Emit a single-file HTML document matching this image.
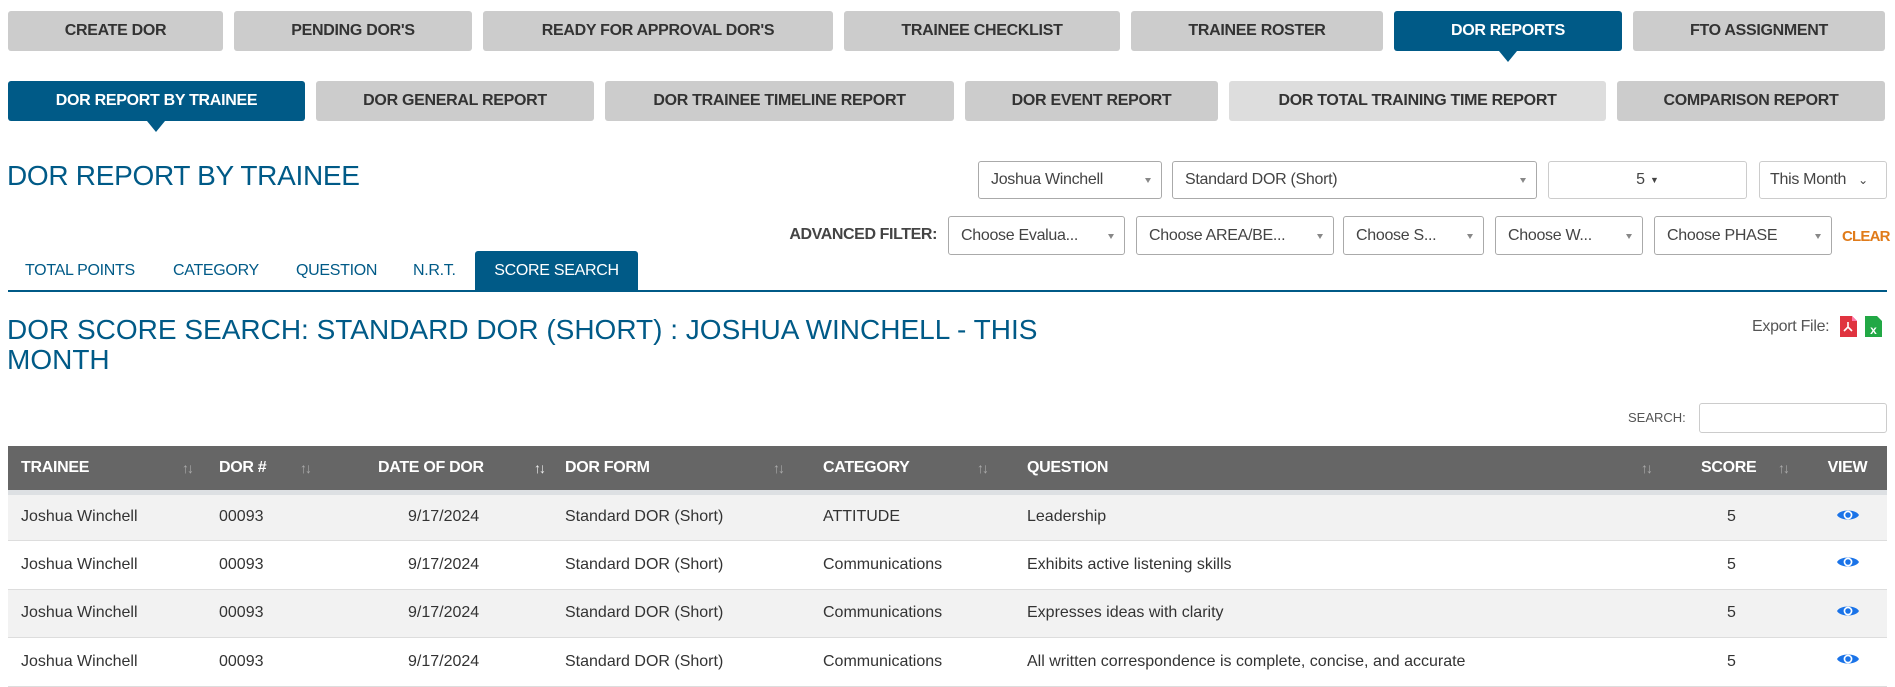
<!DOCTYPE html>
<html><head><meta charset="utf-8">
<style>
*{box-sizing:border-box;margin:0;padding:0}
body{width:1895px;height:666px;overflow:hidden;background:#fff;font-family:"Liberation Sans",sans-serif;color:#333;position:relative}
.a{position:absolute}
.btn{position:absolute;background:#ccc;border-radius:3px;font-weight:bold;font-size:16px;letter-spacing:-0.3px;color:#333;display:flex;align-items:center;justify-content:center}
.btn.on{background:#005a87;color:#fff}
.tri{position:absolute;width:0;height:0;border-left:9px solid transparent;border-right:9px solid transparent;border-top:11px solid #005a87}
.sel{position:absolute;border:1px solid #aaa;border-radius:3px;font-size:16px;color:#444;display:flex;align-items:center;padding-left:12px;background:#fff;letter-spacing:-0.3px}
.sel:after{content:"";position:absolute;right:10px;top:50%;margin-top:-2px;border-left:3px solid transparent;border-right:3px solid transparent;border-top:5px solid #888}
.tab{position:absolute;top:251px;height:40px;font-size:16px;color:#005a87;display:flex;align-items:center;letter-spacing:-0.3px}
table{position:absolute;left:8px;top:446px;width:1879px;border-collapse:collapse;font-size:16px;table-layout:fixed}
th{background:#666;color:#fff;font-weight:bold;text-align:left;height:46px;border-bottom:5px solid #dde0e3;position:relative;padding-left:13px;letter-spacing:-0.3px}
td{height:48.5px;padding-left:13px;border-bottom:1px solid #ddd}
tr:nth-child(even) td{background:#f2f2f2}
.s{position:absolute;top:14px;color:#aaa;font-size:14px;font-weight:normal;letter-spacing:-2px}
</style></head><body>
<div class="btn" style="left:8px;top:11px;width:215px;height:40px">CREATE DOR</div>
<div class="btn" style="left:234px;top:11px;width:238px;height:40px">PENDING DOR'S</div>
<div class="btn" style="left:483px;top:11px;width:350px;height:40px">READY FOR APPROVAL DOR'S</div>
<div class="btn" style="left:844px;top:11px;width:276px;height:40px">TRAINEE CHECKLIST</div>
<div class="btn" style="left:1131px;top:11px;width:252px;height:40px">TRAINEE ROSTER</div>
<div class="btn on" style="left:1394px;top:11px;width:228px;height:40px">DOR REPORTS</div>
<div class="tri" style="left:1499px;top:51px"></div>
<div class="btn" style="left:1633px;top:11px;width:252px;height:40px">FTO ASSIGNMENT</div>

<div class="btn on" style="left:8px;top:81px;width:297px;height:40px">DOR REPORT BY TRAINEE</div>
<div class="tri" style="left:147px;top:121px"></div>
<div class="btn" style="left:316px;top:81px;width:278px;height:40px">DOR GENERAL REPORT</div>
<div class="btn" style="left:605px;top:81px;width:349px;height:40px">DOR TRAINEE TIMELINE REPORT</div>
<div class="btn" style="left:965px;top:81px;width:253px;height:40px">DOR EVENT REPORT</div>
<div class="btn" style="left:1229px;top:81px;width:377px;height:40px;background:#ddd">DOR TOTAL TRAINING TIME REPORT</div>
<div class="btn" style="left:1617px;top:81px;width:268px;height:40px">COMPARISON REPORT</div>

<div class="a" style="left:7px;top:160px;font-size:28px;letter-spacing:-0.3px;color:#005a87">DOR REPORT BY TRAINEE</div>

<div class="sel" style="left:978px;top:161px;width:184px;height:38px">Joshua Winchell</div>
<div class="sel" style="left:1172px;top:161px;width:365px;height:38px">Standard DOR (Short)</div>
<div class="a" style="left:1548px;top:161px;width:199px;height:38px;border:1px solid #ccc;border-radius:3px;font-size:16px;display:flex;align-items:center;justify-content:center;color:#444">5 <span style="font-size:9px;margin-left:5px">▼</span></div>
<div class="a" style="left:1759px;top:161px;width:128px;height:38px;border:1px solid #ccc;border-radius:3px;font-size:16px;display:flex;align-items:center;padding-left:10px;color:#444;letter-spacing:-0.3px">This Month <span style="margin-left:12px;font-size:12px">⌄</span></div>

<div class="a" style="left:760px;top:226px;width:177px;text-align:right;font-size:16px;font-weight:bold;color:#444;letter-spacing:-0.4px">ADVANCED FILTER:</div>
<div class="sel" style="left:948px;top:216px;width:177px;height:39px">Choose Evalua...</div>
<div class="sel" style="left:1136px;top:216px;width:198px;height:39px">Choose AREA/BE...</div>
<div class="sel" style="left:1343px;top:216px;width:141px;height:39px">Choose S...</div>
<div class="sel" style="left:1495px;top:216px;width:148px;height:39px">Choose W...</div>
<div class="sel" style="left:1654px;top:216px;width:178px;height:39px">Choose PHASE</div>
<div class="a" style="left:1842px;top:228px;font-size:15px;font-weight:bold;color:#e07b1a;letter-spacing:-0.8px">CLEAR</div>

<div class="tab" style="left:25px">TOTAL POINTS</div>
<div class="tab" style="left:173px">CATEGORY</div>
<div class="tab" style="left:296px">QUESTION</div>
<div class="tab" style="left:413px">N.R.T.</div>
<div class="tab" style="left:475px;width:163px;background:#005a87;color:#fff;justify-content:center;border-radius:3px 3px 0 0">SCORE SEARCH</div>
<div class="a" style="left:8px;top:290px;width:1879px;height:2px;background:#005a87"></div>

<div class="a" style="left:7px;top:315px;width:1080px;font-size:28px;line-height:30px;color:#005a87">DOR SCORE SEARCH: STANDARD DOR (SHORT) : JOSHUA WINCHELL - THIS MONTH</div>
<div class="a" style="left:1752px;top:318px;font-size:16px;color:#555;letter-spacing:-0.3px">Export File:</div>
<svg class="a" style="left:1840px;top:316px" width="17" height="21" viewBox="0 0 17 21"><path d="M0 0h12l5 5v16H0z" fill="#e0333f"/><path d="M12 0v5h5" fill="#f7a"/><path d="M8 6v6M4 15l4-4 4 4" stroke="#fff" stroke-width="1.6" fill="none"/></svg>
<svg class="a" style="left:1865px;top:316px" width="17" height="21" viewBox="0 0 17 21"><path d="M0 0h12l5 5v16H0z" fill="#22a845"/><text x="8.5" y="18" fill="#fff" font-size="12" font-weight="bold" text-anchor="middle" font-family="Liberation Sans">x</text></svg>

<div class="a" style="left:1628px;top:410px;font-size:13px;color:#555">SEARCH:</div>
<div class="a" style="left:1699px;top:403px;width:188px;height:30px;border:1px solid #ccc;border-radius:3px"></div>

<table>
<colgroup><col style="width:198px"><col style="width:162px"><col style="width:184px"><col style="width:258px"><col style="width:204px"><col style="width:669px"><col style="width:125px"><col></colgroup>
<tr><th>TRAINEE<span class="s" style="left:174px">↑↓</span></th>
<th>DOR #<span class="s" style="left:94px">↑↓</span></th>
<th style="padding-left:10px">DATE OF DOR<span class="s" style="left:166px;color:#eee">↑↓</span></th>
<th>DOR FORM<span class="s" style="left:221px">↑↓</span></th>
<th>CATEGORY<span class="s" style="left:167px">↑↓</span></th>
<th>QUESTION<span class="s" style="left:627px">↑↓</span></th>
<th style="padding-left:0;text-align:left;padding-left:18px">SCORE<span class="s" style="left:95px">↑↓</span></th>
<th style="padding-left:0;text-align:center">VIEW</th></tr>
<tr><td>Joshua Winchell</td><td>00093</td><td style="padding-left:40px">9/17/2024</td><td>Standard DOR (Short)</td><td>ATTITUDE</td><td>Leadership</td><td style="padding-left:44px">5</td><td style="text-align:center;padding:0"><svg width="22" height="16" viewBox="0 0 20 14"><path d="M0 7C3 1.5 17 1.5 20 7C17 12.5 3 12.5 0 7z" fill="#1a73e8"/><circle cx="10" cy="7" r="4" fill="#fff"/><circle cx="10" cy="7" r="2.5" fill="#1a73e8"/></svg></td></tr>
<tr><td>Joshua Winchell</td><td>00093</td><td style="padding-left:40px">9/17/2024</td><td>Standard DOR (Short)</td><td>Communications</td><td>Exhibits active listening skills</td><td style="padding-left:44px">5</td><td style="text-align:center;padding:0"><svg width="22" height="16" viewBox="0 0 20 14"><path d="M0 7C3 1.5 17 1.5 20 7C17 12.5 3 12.5 0 7z" fill="#1a73e8"/><circle cx="10" cy="7" r="4" fill="#fff"/><circle cx="10" cy="7" r="2.5" fill="#1a73e8"/></svg></td></tr>
<tr><td>Joshua Winchell</td><td>00093</td><td style="padding-left:40px">9/17/2024</td><td>Standard DOR (Short)</td><td>Communications</td><td>Expresses ideas with clarity</td><td style="padding-left:44px">5</td><td style="text-align:center;padding:0"><svg width="22" height="16" viewBox="0 0 20 14"><path d="M0 7C3 1.5 17 1.5 20 7C17 12.5 3 12.5 0 7z" fill="#1a73e8"/><circle cx="10" cy="7" r="4" fill="#fff"/><circle cx="10" cy="7" r="2.5" fill="#1a73e8"/></svg></td></tr>
<tr><td>Joshua Winchell</td><td>00093</td><td style="padding-left:40px">9/17/2024</td><td>Standard DOR (Short)</td><td>Communications</td><td>All written correspondence is complete, concise, and accurate</td><td style="padding-left:44px">5</td><td style="text-align:center;padding:0"><svg width="22" height="16" viewBox="0 0 20 14"><path d="M0 7C3 1.5 17 1.5 20 7C17 12.5 3 12.5 0 7z" fill="#1a73e8"/><circle cx="10" cy="7" r="4" fill="#fff"/><circle cx="10" cy="7" r="2.5" fill="#1a73e8"/></svg></td></tr>
</table>
</body></html>
